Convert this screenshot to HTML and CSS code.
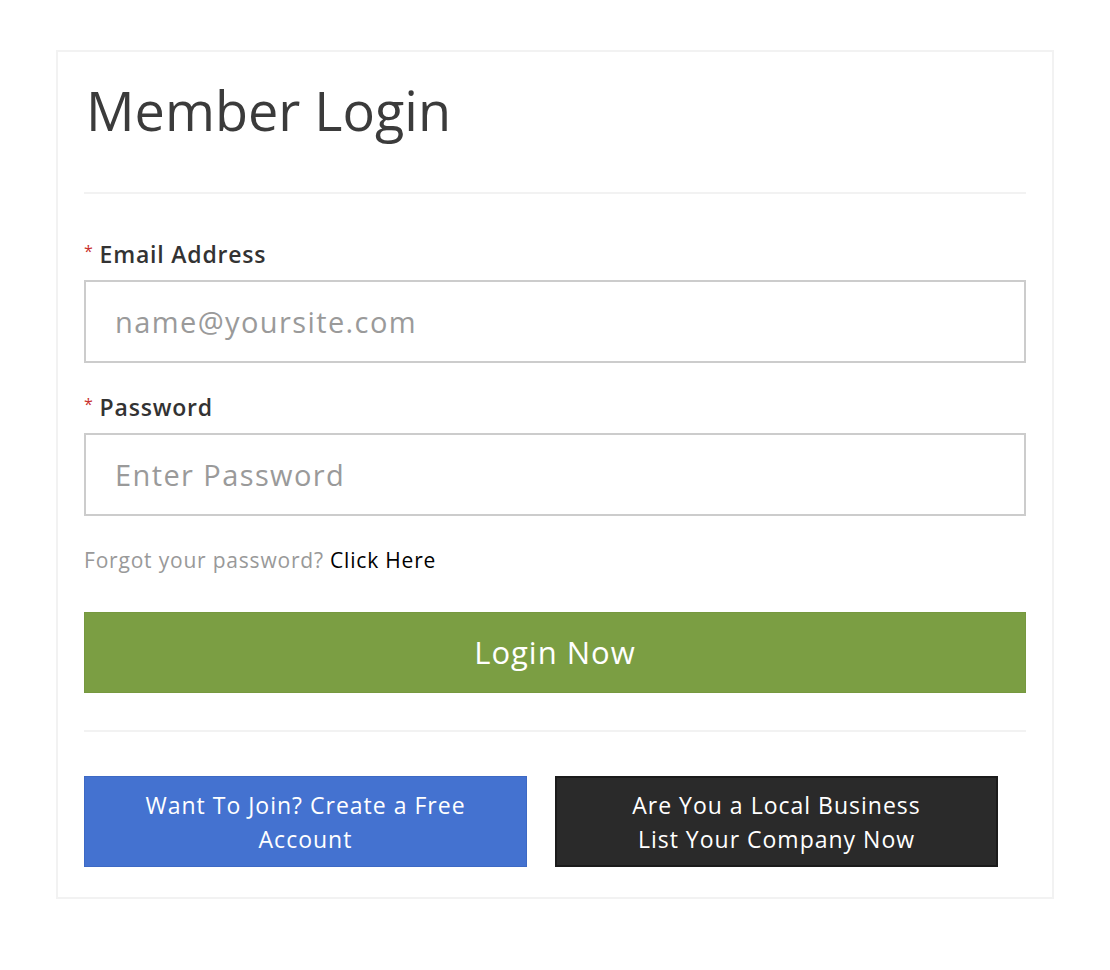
FILE: index.html
```html
<!DOCTYPE html>
<html lang="en">
<head>
<meta charset="utf-8">
<title>Member Login</title>
<link rel="stylesheet" href="styles.css">
</head>
<body>
<div class="card">
  <h1 class="title">Member Login</h1>
  <hr class="rule">
  <form class="form">
    <div class="group">
      <label class="label" for="email"><span class="req">*</span> Email Address</label>
      <input class="field" id="email" type="text" placeholder="name@yoursite.com">
    </div>
    <div class="group">
      <label class="label" for="pass"><span class="req">*</span> Password</label>
      <input class="field" id="pass" type="password" placeholder="Enter Password">
    </div>
    <p class="forgot">Forgot your password? <a class="forgot-link" href="#">Click Here</a></p>
    <button class="login" type="button">Login Now</button>
  </form>
  <hr class="rule rule-bottom">
  <div class="actions">
    <a class="btn btn-blue" href="#">Want To Join? Create a Free Account</a>
    <a class="btn btn-dark" href="#">Are You a Local Business<br>List Your Company Now</a>
  </div>
</div>
</body>
</html>
```

FILE: styles.css
```css
html, body {
  margin: 0;
  padding: 0;
  background: #ffffff;
}

body {
  font-family: "Open Sans", "Lato", sans-serif;
  color: #333333;
}

.card {
  box-sizing: border-box;
  width: 998px;
  margin: 50px 0 0 56px;
  border: 2px solid #f2f2f2;
  padding: 26px 26px 30px 26px;
}

.title {
  font-family: "Open Sans", sans-serif;
  font-weight: 400;
  font-size: 54px;
  line-height: 1.2;
  color: #3b3b3b;
  margin: 0 0 49px 2px;
}

.rule {
  border: 0;
  height: 2px;
  background: #f2f2f2;
  margin: 0;
}

.form {
  margin: 45px 0 0 0;
}

.group {
  margin-bottom: 29px;
}

.label {
  display: block;
  font-weight: 600;
  font-size: 23px;
  line-height: 30px;
  letter-spacing: 0.8px;
  color: #333333;
  margin: 0 0 11px 0;
}

.req {
  color: #c9302c;
  font-size: 16px;
  line-height: 0;
  vertical-align: 6px;
  font-weight: 400;
  letter-spacing: 0;
}

.field {
  display: block;
  box-sizing: border-box;
  width: 100%;
  height: 83px;
  border: 2px solid #cccccc;
  border-radius: 0;
  padding: 0 29px;
  font-family: "Open Sans", "Lato", sans-serif;
  font-size: 29px;
  letter-spacing: 1.4px;
  color: #333333;
  background: #ffffff;
  outline: none;
}

.field::placeholder {
  color: #9a9a9a;
  opacity: 1;
}

.forgot {
  margin: 0 0 37px 0;
  font-size: 21px;
  line-height: 30px;
  letter-spacing: 0.8px;
  color: #999999;
}

.forgot-link {
  color: #000000;
  text-decoration: none;
}

.login {
  display: flex;
  align-items: center;
  justify-content: center;
  box-sizing: border-box;
  width: 100%;
  height: 81px;
  border: 1px solid #76983f;
  background: #7b9e43;
  color: #ffffff;
  font-family: "Open Sans", "Lato", sans-serif;
  font-size: 31px;
  letter-spacing: 1px;
  font-weight: 400;
  padding: 0;
  margin: 0;
  cursor: pointer;
}

.rule-bottom {
  margin-top: 37px;
}

.actions {
  display: grid;
  grid-template-columns: 1fr 1fr;
  column-gap: 28px;
  padding-right: 28px;
  margin-top: 44px;
}

.btn {
  display: block;
  box-sizing: border-box;
  height: 91px;
  padding: 11px 10px;
  font-size: 23px;
  line-height: 34px;
  letter-spacing: 1px;
  text-align: center;
  color: #ffffff;
  text-decoration: none;
}

.btn-blue {
  background: #4472d0;
  border: 1px solid #3d69c4;
  padding-left: 40px;
  padding-right: 40px;
}

.btn-dark {
  background: #2a2a2a;
  border: 2px solid #1b1b1b;
  padding-top: 10px;
}
```
